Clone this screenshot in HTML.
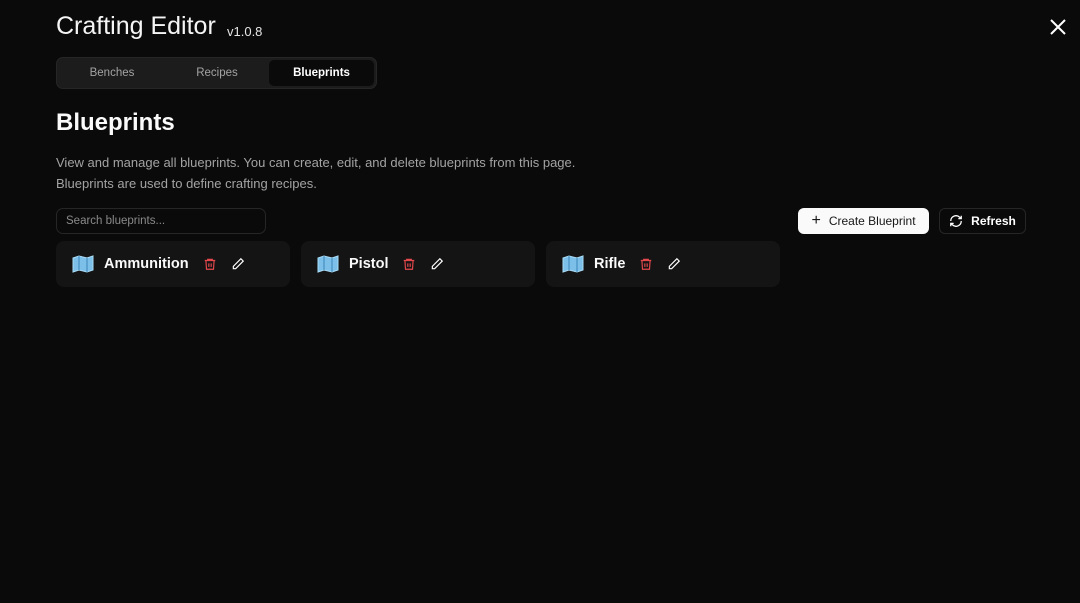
<!DOCTYPE html>
<html><head><style>
*{box-sizing:border-box;margin:0;padding:0}
body{width:1080px;height:603px;background:#0a0a0a;font-family:"Liberation Sans",sans-serif;color:#fafafa;position:relative;overflow:hidden}
.abs{position:absolute}
h1{position:absolute;left:56px;top:12px;font-size:25px;font-weight:400;color:#f5f5f5}
.ver{left:227px;top:24px;font-size:13px;color:#e5e5e5}
.tabs{left:56px;top:57px;width:321px;height:32px;background:#1c1c1c;border:1px solid #262626;border-radius:7px}
.tab{position:absolute;top:2px;height:26px;font-size:11.5px;display:flex;align-items:center;justify-content:center;color:#a3a3a3}
.tab.on{background:#0a0a0a;color:#fff;font-weight:bold;border-radius:5px}
h2{position:absolute;left:56px;top:109px;font-size:24px;font-weight:bold}
.desc{left:56px;top:152px;font-size:13px;color:#a3a3a3;line-height:21px}
.search{left:56px;top:208px;width:210px;height:26px;border:1px solid #262626;border-radius:7px;font-size:11.5px;color:#8a8a8a;padding:6px 9px}
.btn{top:208px;height:26px;border-radius:6px;font-size:12px;display:flex;align-items:center;justify-content:center;gap:8px}
.card{top:241px;height:46px;width:234px;background:#141414;border-radius:8px;display:flex;align-items:center;padding-left:16px}
.card b{font-size:14.5px;margin-left:10px;margin-right:14px}
.card svg{flex:none}
</style></head><body>
<h1>Crafting Editor</h1>
<div class="abs ver">v1.0.8</div>
<svg class="abs" style="left:1049px;top:18px" width="18" height="18" viewBox="0 0 18 18"><path d="M2 2L16 16M16 2L2 16" stroke="#fff" stroke-width="2"/></svg>
<div class="abs tabs">
<div class="tab" style="left:2px;width:106px">Benches</div>
<div class="tab" style="left:108px;width:104px">Recipes</div>
<div class="tab on" style="left:212px;width:105px">Blueprints</div>
</div>
<h2>Blueprints</h2>
<div class="abs desc">View and manage all blueprints. You can create, edit, and delete blueprints from this page.<br>Blueprints are used to define crafting recipes.</div>
<div class="abs search">Search blueprints...</div>
<div class="abs btn" style="left:798px;width:131px;background:#fafafa;color:#171717"><span style="font-size:16px">+</span>Create Blueprint</div>
<div class="abs btn" style="left:939px;width:87px;border:1px solid #262626;color:#fff;font-weight:bold">
<svg width="14" height="14" viewBox="0 0 24 24" fill="none" stroke="#fff" stroke-width="2.2"><path d="M3 12a9 9 0 0 1 15-6.7L21 8M21 3v5h-5M21 12a9 9 0 0 1-15 6.7L3 16M3 21v-5h5"/></svg>Refresh</div>
<div class="abs card" style="left:56px"><svg width="22" height="18" viewBox="0 0 22 18"><path d="M1 3l6-2 8 2 6-2v14l-6 2-8-2-6 2z" fill="#7cc0ea" stroke="#a9dcf7"/><path d="M7 1v14M15 3v14" stroke="#3d84b8"/></svg><b>Ammunition</b>
<svg width="14" height="14" viewBox="0 0 24 24" fill="none" stroke="#e5484d" stroke-width="2"><path d="M3 6h18M8 6V4h8v2M5 6l1 15h12l1-15M10 11v6M14 11v6"/></svg>
<svg style="margin-left:14px" width="14" height="14" viewBox="0 0 24 24" fill="none" stroke="#fff" stroke-width="2"><path d="M17 3l4 4L8 20H4v-4z"/></svg></div>
<div class="abs card" style="left:301px"><svg width="22" height="18" viewBox="0 0 22 18"><path d="M1 3l6-2 8 2 6-2v14l-6 2-8-2-6 2z" fill="#7cc0ea" stroke="#a9dcf7"/><path d="M7 1v14M15 3v14" stroke="#3d84b8"/></svg><b>Pistol</b>
<svg width="14" height="14" viewBox="0 0 24 24" fill="none" stroke="#e5484d" stroke-width="2"><path d="M3 6h18M8 6V4h8v2M5 6l1 15h12l1-15M10 11v6M14 11v6"/></svg>
<svg style="margin-left:14px" width="14" height="14" viewBox="0 0 24 24" fill="none" stroke="#fff" stroke-width="2"><path d="M17 3l4 4L8 20H4v-4z"/></svg></div>
<div class="abs card" style="left:546px"><svg width="22" height="18" viewBox="0 0 22 18"><path d="M1 3l6-2 8 2 6-2v14l-6 2-8-2-6 2z" fill="#7cc0ea" stroke="#a9dcf7"/><path d="M7 1v14M15 3v14" stroke="#3d84b8"/></svg><b>Rifle</b>
<svg width="14" height="14" viewBox="0 0 24 24" fill="none" stroke="#e5484d" stroke-width="2"><path d="M3 6h18M8 6V4h8v2M5 6l1 15h12l1-15M10 11v6M14 11v6"/></svg>
<svg style="margin-left:14px" width="14" height="14" viewBox="0 0 24 24" fill="none" stroke="#fff" stroke-width="2"><path d="M17 3l4 4L8 20H4v-4z"/></svg></div>
</body></html>
